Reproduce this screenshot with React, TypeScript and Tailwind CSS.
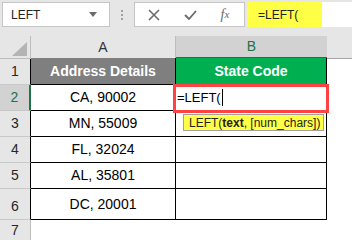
import { useState } from 'react'

const rows = [
  { n: 1, h: 'h-[27px]', a: 'Address Details', head: true },
  { n: 2, h: 'h-[26px]', a: 'CA, 90002' },
  { n: 3, h: 'h-[26px]', a: 'MN, 55009' },
  { n: 4, h: 'h-[26px]', a: 'FL, 32024' },
  { n: 5, h: 'h-[26px]', a: 'AL, 35801' },
  { n: 6, h: 'h-[31px]', a: 'DC, 20001' },
]

function FormulaBar({ value }: { value: string }) {
  return (
    <div className="flex h-[36px] items-start bg-[#e6e6e6] pt-[2px]">
      {/* Name box */}
      <div className="ml-[2px] flex h-[25px] w-[108px] items-center justify-between border border-[#c6c6c6] bg-white pl-[8px] pr-[12px] text-[12px] text-[#222]">
        <span>LEFT</span>
        <svg width="8" height="5" viewBox="0 0 8 5">
          <path d="M0 0h8L4 5z" fill="#6a6a6a" />
        </svg>
      </div>
      <div className="flex h-[25px] w-[24px] flex-col items-center justify-center gap-[2px]">
        <span className="h-[2px] w-[2px] bg-[#a0a0a0]" />
        <span className="h-[2px] w-[2px] bg-[#a0a0a0]" />
        <span className="h-[2px] w-[2px] bg-[#a0a0a0]" />
      </div>
      {/* Cancel / Enter / fx */}
      <div className="flex h-[25px] w-[111px] items-center border border-[#c6c6c6] bg-white">
        <div className="flex w-[38px] justify-center">
          <svg width="12" height="12" viewBox="0 0 12 12">
            <path d="M1 1l10 10M11 1L1 11" stroke="#6a6a6a" strokeWidth="1.6" />
          </svg>
        </div>
        <div className="flex w-[34px] justify-center">
          <svg width="13" height="10" viewBox="0 0 13 10">
            <path d="M1 5l4 4 7-8" stroke="#6a6a6a" strokeWidth="1.8" fill="none" />
          </svg>
        </div>
        <div className="flex w-[36px] justify-center font-['Liberation_Serif',serif] text-[14px] italic text-[#6a6a6a]">
          <span>f</span>
          <span className="text-[11px] leading-[20px]">x</span>
        </div>
      </div>
      <div className="ml-[2px] flex h-[25px] flex-1 bg-white">
        <div className="flex w-[75px] items-center bg-[#ffff45] pl-[11px] text-[12px] text-[#222]">
          {value}
        </div>
      </div>
    </div>
  )
}

export default function App() {
  const [value] = useState('=LEFT(')

  return (
    <div className="relative h-[240px] w-[352px] overflow-hidden bg-white font-['Liberation_Sans',Arial,sans-serif]">
      <FormulaBar value={value} />

      {/* Column headers */}
      <div className="grid h-[22px] grid-cols-[31px_145px_151px_1fr] bg-[#e6e6e6] text-[14px]">
        <div className="relative border-r border-b border-[#bdbdbd]">
          <svg className="absolute right-[3px] bottom-[2px]" width="15" height="14" viewBox="0 0 15 14">
            <path d="M15 0v14H0z" fill="#b4b4b4" />
          </svg>
        </div>
        <div className="flex items-center justify-center border-r border-b border-[#bdbdbd] text-[#333]">A</div>
        <div className="flex items-center justify-center border-b-2 border-[#217346] bg-[#d2d2d2] text-[#217346]">B</div>
        <div className="border-b border-[#a6a6a6]" />
      </div>

      {/* Rows */}
      {rows.map(r => (
        <div key={r.n} className={`grid ${r.h} grid-cols-[31px_145px_151px_1fr] text-[14px]`}>
          <div
            className={`flex items-end justify-center border-b border-[#c8c8c8] pb-[2px] ${
              r.n === 2
                ? 'border-r-2 border-r-[#217346] bg-[#d2d2d2] text-[#217346]'
                : 'border-r border-r-black bg-[#e6e6e6] text-[#262626]'
            }`}
          >
            {r.n}
          </div>
          {r.head ? (
            <>
              <div className="flex items-center justify-center border-r border-b border-black bg-[#7f7f7f] font-bold text-white">
                {r.a}
              </div>
              <div className="flex items-center justify-center border-r border-b border-black bg-[#00b050] font-bold text-white">
                State Code
              </div>
            </>
          ) : (
            <>
              <div className="flex items-center justify-center border-r border-b border-black text-black">{r.a}</div>
              <div className="flex items-center border-r border-b border-black pl-[1px] text-[13px] text-black">
                {r.n === 2 && (
                  <>
                    <span>{value}</span>
                    <span className="ml-[1px] h-[17px] w-[1px] bg-black" />
                  </>
                )}
              </div>
            </>
          )}
          <div />
        </div>
      ))}
      <div className="grid h-[20px] grid-cols-[31px_145px_151px_1fr] text-[14px]">
        <div className="flex items-end justify-center border-r border-[#bdbdbd] bg-[#e6e6e6] pb-[1px] text-[#262626]">7</div>
      </div>

      {/* Active cell outline */}
      <div className="absolute top-[84px] left-[173px] h-[29px] w-[156px] border-[3px] border-[#ff4242]" />

      {/* Function tooltip */}
      <div className="absolute top-[114px] left-[183px] flex h-[17px] w-[141px] items-center border border-[#a0a0a0] bg-[#ffff45] pl-[5px] text-[12px] text-[#222]">
        LEFT(<b>text</b>, [num_chars])
      </div>
    </div>
  )
}
